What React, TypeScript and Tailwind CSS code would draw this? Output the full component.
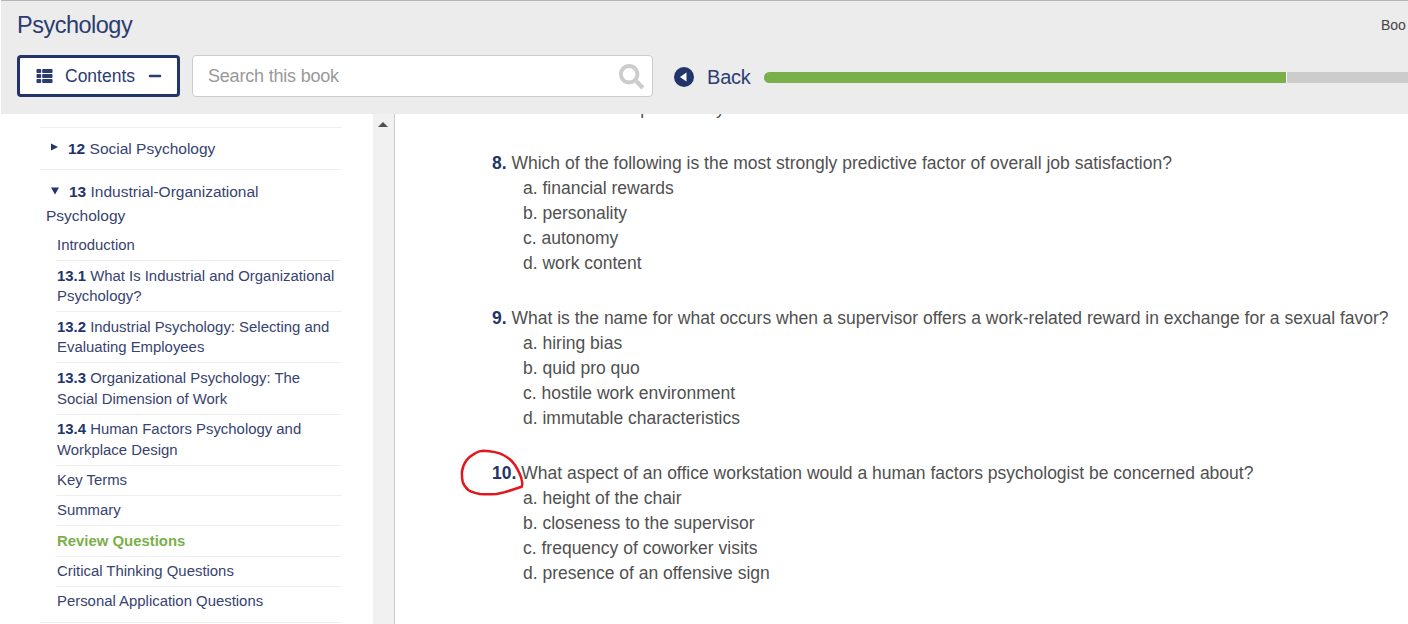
import { FaThList, FaMinus, FaSearch } from "react-icons/fa";

const questions = [
  {
    num: "8",
    text: "Which of the following is the most strongly predictive factor of overall job satisfaction?",
    options: ["a. financial rewards", "b. personality", "c. autonomy", "d. work content"],
  },
  {
    num: "9",
    text: "What is the name for what occurs when a supervisor offers a work-related reward in exchange for a sexual favor?",
    options: ["a. hiring bias", "b. quid pro quo", "c. hostile work environment", "d. immutable characteristics"],
  },
  {
    num: "10",
    text: "What aspect of an office workstation would a human factors psychologist be concerned about?",
    options: ["a. height of the chair", "b. closeness to the supervisor", "c. frequency of coworker visits", "d. presence of an offensive sign"],
  },
];

const sections = [
  { num: "13.1", title: "What Is Industrial and Organizational Psychology?" },
  { num: "13.2", title: "Industrial Psychology: Selecting and Evaluating Employees" },
  { num: "13.3", title: "Organizational Psychology: The Social Dimension of Work" },
  { num: "13.4", title: "Human Factors Psychology and Workplace Design" },
  { title: "Key Terms" },
  { title: "Summary" },
  { title: "Review Questions", active: true },
  { title: "Critical Thinking Questions" },
  { title: "Personal Application Questions" },
];

function Header() {
  return (
    <header className="relative z-10 ml-px h-[114px] border-t border-[#b5b5b5] bg-[#ececec] pl-[16px]">
      <div className="flex h-[54px] items-start">
        <h1 className="mt-[9px] text-[23.500px] leading-[30px] tracking-[-0.500px] text-[#2b3d70]">Psychology</h1>
        <div className="ml-auto mr-[2px] mt-[14px] w-[25px] overflow-hidden text-[14px] leading-[20px] text-[#444]">Book</div>
      </div>
      <div className="flex items-center">
        <button className="flex h-[42px] w-[163px] items-center rounded-[4px] border-[3px] border-[#22356b] bg-white pl-[16px] text-[17.500px] text-[#2b3d70]">
          <FaThList className="h-[16px] w-[17px]" />
          <span className="ml-[12px]">Contents</span>
          <FaMinus className="ml-[13px] h-[14px] w-[14px]" />
        </button>
        <div className="ml-[12px] flex h-[42px] w-[461px] items-center justify-between rounded-[4px] border border-[#ccc] bg-white pl-[15px] pr-[8px]">
          <span className="text-[18px] tracking-[-0.2px] text-[#999]">Search this book</span>
          <FaSearch className="h-[25px] w-[25px] text-[#ccc]" />
        </div>
        <svg className="ml-[21px] mt-[2px] h-[20px] w-[20px]" viewBox="0 0 20 20">
          <circle cx="10" cy="10" r="10" fill="#22356b" />
          <path d="M12.5 5.5v9L6 10z" fill="#fff" />
        </svg>
        <span className="ml-[13px] mt-[2px] text-[20px] tracking-[-0.2px] text-[#2b3d70]">Back</span>
        <div className="ml-[13px] mt-[2px] flex h-[11px] flex-1 overflow-hidden rounded-l-full bg-[#ccc]">
          <div className="h-full w-[523px] border-r border-white bg-[#79b04a]" />
        </div>
      </div>
    </header>
  );
}

function Sidebar() {
  return (
    <aside className="flex h-[510px] w-[395px] shrink-0 overflow-hidden">
      <div className="w-[373px] pl-[40px] pr-[32px] pt-[13px] text-[#37436f]">
        <div className="flex h-[42px] items-center border-t border-[#eee] pl-[11px] pt-[1px] text-[15.500px]">
          <svg className="mb-[4px] h-[8px] w-[7px]" viewBox="0 0 7 8">
            <path d="M0 .5l7 3.500-7 3.500z" fill="#22356b" />
          </svg>
          <span className="ml-[10px]"><b className="text-[#22356b]">12</b> Social Psychology</span>
        </div>
        <div className="border-t border-[#eee] pb-[3px] pl-[6px] pt-[10px] text-[15.500px] leading-[24px]">
          <div className="pl-[5px]">
            <svg className="mb-[4px] mr-[10px] inline-block h-[8px] w-[8px]" viewBox="0 0 8 8">
              <path d="M0 .5h8L4 7.500z" fill="#22356b" />
            </svg>
            <b className="text-[#22356b]">13</b> Industrial-Organizational
          </div>
          Psychology
        </div>
        <div className="ml-[16px]">
          <div className="py-[4.25px] pl-px text-[14.900px] leading-[20.800px]">Introduction</div>
          {sections.map((s) => (
            <div
              key={s.title}
              className={`border-t border-[#eee] py-[4.25px] pl-px text-[14.900px] leading-[20.800px] ${s.active ? "font-bold text-[#79b04a]" : ""}`}
            >
              {s.num && <b className="text-[#22356b]">{s.num} </b>}
              {s.title}
            </div>
          ))}
        </div>
        <div className="mt-[6px] border-t border-[#eee]" />
      </div>
      <div className="w-[22px] border-r border-[#ccc] bg-[#f1f1f1] pl-[5px] pt-[8px]">
        <svg className="h-[5px] w-[10px]" viewBox="0 0 10 5">
          <path d="M5 0l5 5H0z" fill="#505050" />
        </svg>
      </div>
    </aside>
  );
}

function Questions() {
  return (
    <main className="relative -mt-[18.500px] flex-1 whitespace-nowrap pl-[97px] text-[17.500px] leading-[25px] text-[#505050]">
      <div className="pl-[34px]">d. the leader's personality</div>
      {questions.map((q) => (
        <div key={q.num} className="mt-[30px]">
          <div>
            <b className="text-[#22356b]">{q.num}.</b> {q.text}
          </div>
          <ul className="pl-[31px]">
            {q.options.map((o) => (
              <li key={o}>{o}</li>
            ))}
          </ul>
        </div>
      ))}
      {/* hand drawn circle around the 10 */}
      <svg className="absolute left-[64px] top-[350.500px] h-[56px] w-[80px]" viewBox="0 0 80 56" fill="none">
        <path
          d="M24.300 4.700C32 5 39 6 44.300 9C50 12 54 16 56 19C59 24 62 29 62.700 34C63.500 37 63.500 39 62.700 40.700C59 42 56 43 52.700 44C47 46 43 47 37.700 48C31 48.500 26 48.500 21 48C16 47 12 46 9.300 44C6 41 4.500 39 3.700 35.700C3 32 2.700 29 3 25.700C3.500 21 5.500 17 7.700 14C10 11 13 9 16 7.300C19 5.500 22 4.700 24.300 4.700Z"
          stroke="#e2161c"
          strokeWidth="2.500"
        />
      </svg>
    </main>
  );
}

export default function App() {
  return (
    <div className="h-[624px] w-[1408px] overflow-hidden bg-white font-['Liberation_Sans',Arial,sans-serif]">
      <Header />
      <div className="flex">
        <Sidebar />
        <Questions />
      </div>
    </div>
  );
}
